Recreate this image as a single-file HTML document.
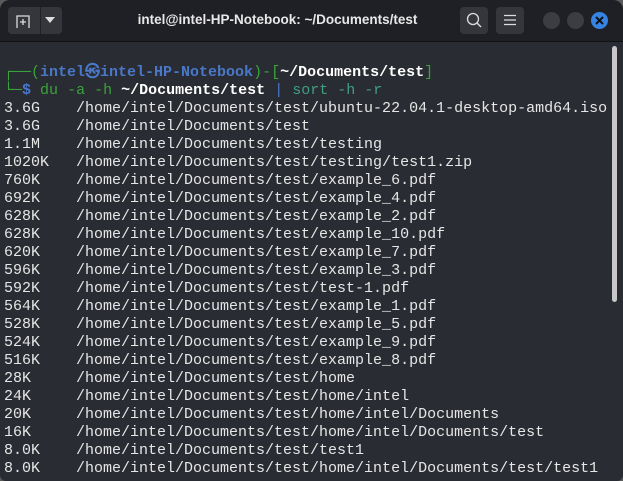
<!DOCTYPE html><html><head><style>
body{margin:0;width:623px;height:481px;background:#5a5a5a;overflow:hidden;font-family:"Liberation Sans",sans-serif}
.win{position:absolute;left:0;top:0;width:623px;height:481px;background:#2a2c33;border-radius:10px 10px 6px 6px;overflow:hidden}
.hdr{position:absolute;left:0;top:0;width:623px;height:41px;background:#1f2025;border-bottom:1px solid #111}
.btn{position:absolute;top:7px;height:27px;background:#34363c;border-radius:4px}
.title{position:absolute;left:122px;width:311px;top:12px;text-align:center;color:#e8e8e8;font-weight:bold;font-size:13.5px;white-space:nowrap}
.c{position:absolute;top:12px;width:17px;height:17px;border-radius:50%;background:#3b3d43}
pre{position:absolute;left:4px;top:64px;margin:0;font-family:"Liberation Mono",monospace;font-size:15px;line-height:18px;color:#e6e6e6}
.g{color:#3aa33a}.b{color:#4a78c8}.w{color:#fff;font-weight:bold}.t{color:#3f9f7f}
.sb{position:absolute;left:612px;top:46px;width:5px;height:256px;background:#c8c8c8;border-radius:3px}
</style></head><body><div class="win">
<div class="hdr">
<div class="btn" style="left:8px;width:54px"></div>
<div style="position:absolute;left:40px;top:7px;width:1px;height:27px;background:#222"></div>
<svg style="position:absolute;left:15px;top:13px" width="16" height="16"><path d="M2 15V3h12v12" fill="none" stroke="#ddd" stroke-width="1.3"/><path d="M8 6v6M5 9h6" stroke="#ddd" stroke-width="1.3"/></svg>
<svg style="position:absolute;left:45px;top:17px" width="10" height="6"><path d="M0 0h10L5 6z" fill="#ddd"/></svg>
<div class="title">intel@intel-HP-Notebook: ~/Documents/test</div>
<div class="btn" style="left:460px;width:28px"></div>
<svg style="position:absolute;left:466px;top:12px" width="16" height="16"><circle cx="7" cy="7" r="5.5" fill="none" stroke="#ddd" stroke-width="1.3"/><path d="M11 11l4 4" stroke="#ddd" stroke-width="1.4"/></svg>
<div class="btn" style="left:496px;width:28px"></div>
<svg style="position:absolute;left:504px;top:14px" width="12" height="12"><path d="M0 1.5h12M0 6h12M0 10.5h12" stroke="#ddd" stroke-width="1.2"/></svg>
<div class="c" style="left:543px"></div><div class="c" style="left:567px"></div>
<div class="c" style="left:591px;background:#3584e4"></div>
<svg style="position:absolute;left:595px;top:16px" width="9" height="9"><path d="M1 1l7 7M8 1l-7 7" stroke="#111" stroke-width="2"/></svg>
</div>
<div class="sb"></div>
<pre><span class="g">┌──(</span><span class="b" style="font-weight:bold">intel㉿intel-HP-Notebook</span><span class="g">)-[</span><span class="w">~/Documents/test</span><span class="g">]</span>
<span class="g">└─</span><span class="b" style="font-weight:bold">$</span> <span class="g">du</span> <span class="g">-a</span> <span class="g">-h</span> <span class="w">~/Documents/test</span> <span class="b">|</span> <span class="t">sort</span> <span class="t">-h -r</span>
3.6G    /home/intel/Documents/test/ubuntu-22.04.1-desktop-amd64.iso
3.6G    /home/intel/Documents/test
1.1M    /home/intel/Documents/test/testing
1020K   /home/intel/Documents/test/testing/test1.zip
760K    /home/intel/Documents/test/example_6.pdf
692K    /home/intel/Documents/test/example_4.pdf
628K    /home/intel/Documents/test/example_2.pdf
628K    /home/intel/Documents/test/example_10.pdf
620K    /home/intel/Documents/test/example_7.pdf
596K    /home/intel/Documents/test/example_3.pdf
592K    /home/intel/Documents/test/test-1.pdf
564K    /home/intel/Documents/test/example_1.pdf
528K    /home/intel/Documents/test/example_5.pdf
524K    /home/intel/Documents/test/example_9.pdf
516K    /home/intel/Documents/test/example_8.pdf
28K     /home/intel/Documents/test/home
24K     /home/intel/Documents/test/home/intel
20K     /home/intel/Documents/test/home/intel/Documents
16K     /home/intel/Documents/test/home/intel/Documents/test
8.0K    /home/intel/Documents/test/test1
8.0K    /home/intel/Documents/test/home/intel/Documents/test/test1</pre>
</div></body></html>
